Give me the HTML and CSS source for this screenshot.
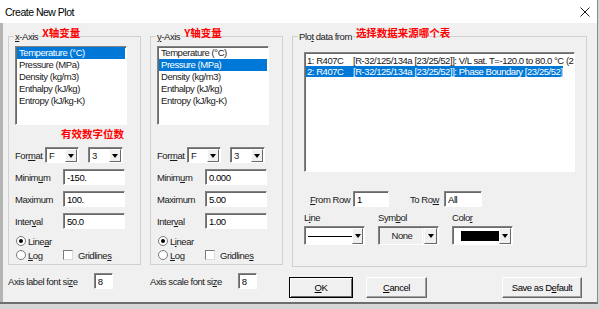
FILE: index.html
```html
<!DOCTYPE html>
<html lang="en">

<head>
    <meta charset="UTF-8">
    <meta name="viewport" content="width=device-width, initial-scale=1.0">
    <title>Create New Plot</title>
    <link rel="stylesheet" href="styles.css">
</head>

<body>
    <div class="dialog">
        <div class="titlebar">
            <span class="title">Create New Plot</span>
            <svg class="close" width="10" height="10" viewBox="0 0 10 10">
                <path d="M0.5 0.5L9.5 9.5M9.5 0.5L0.5 9.5" stroke="#1a1a1a" stroke-width="1" fill="none" />
            </svg>
        </div>

        <div class="content">
            <!-- x axis -->
            <div class="axis-col">
                <fieldset class="group axis-group">
                    <legend><u>x</u>-Axis<span class="note legend-note">X轴变量</span></legend>
                    <div class="listbox axis-list">
                        <div class="item selected">Temperature (°C)</div>
                        <div class="item">Pressure (MPa)</div>
                        <div class="item">Density (kg/m3)</div>
                        <div class="item">Enthalpy (kJ/kg)</div>
                        <div class="item">Entropy (kJ/kg-K)</div>
                    </div>
                    <div class="note digits-note">有效数字位数</div>
                    <div class="field-row">
                        <span class="fmt-label">For<u>m</u>at</span>
                        <div class="combo fmt-combo"><span class="combo-text">F</span><span class="combo-btn"></span></div>
                        <div class="combo fmt-combo digits-combo"><span class="combo-text">3</span><span class="combo-btn"></span></div>
                    </div>
                    <div class="field-row">
                        <span class="field-label">Minim<u>u</u>m</span>
                        <input class="textbox value-box" type="text" value="-150.">
                    </div>
                    <div class="field-row">
                        <span class="field-label">Maximum</span>
                        <input class="textbox value-box" type="text" value="100.">
                    </div>
                    <div class="field-row">
                        <span class="field-label">Inter<u>v</u>al</span>
                        <input class="textbox value-box" type="text" value="50.0">
                    </div>
                    <div class="option-row">
                        <span class="option"><span class="radio checked"></span>Line<u>a</u>r</span>
                    </div>
                    <div class="option-row log-row">
                        <span class="option"><span class="radio"></span><u>L</u>og</span>
                        <span class="check"></span>Gridline<u>s</u>
                    </div>
                </fieldset>
                <div class="font-row">
                    <span>Axis label font si<u>z</u>e</span>
                    <input class="textbox size-box" type="text" value="8">
                </div>
            </div>

            <!-- y axis -->
            <div class="axis-col">
                <fieldset class="group axis-group">
                    <legend><u>y</u>-Axis<span class="note legend-note">Y轴变量</span></legend>
                    <div class="listbox axis-list">
                        <div class="item">Temperature (°C)</div>
                        <div class="item selected">Pressure (MPa)</div>
                        <div class="item">Density (kg/m3)</div>
                        <div class="item">Enthalpy (kJ/kg)</div>
                        <div class="item">Entropy (kJ/kg-K)</div>
                    </div>
                    <div class="note digits-note"></div>
                    <div class="field-row">
                        <span class="fmt-label">For<u>m</u>at</span>
                        <div class="combo fmt-combo"><span class="combo-text">F</span><span class="combo-btn"></span></div>
                        <div class="combo fmt-combo digits-combo"><span class="combo-text">3</span><span class="combo-btn"></span></div>
                    </div>
                    <div class="field-row">
                        <span class="field-label">Minim<u>u</u>m</span>
                        <input class="textbox value-box" type="text" value="0.000">
                    </div>
                    <div class="field-row">
                        <span class="field-label">Maximum</span>
                        <input class="textbox value-box" type="text" value="5.00">
                    </div>
                    <div class="field-row">
                        <span class="field-label">Inter<u>v</u>al</span>
                        <input class="textbox value-box" type="text" value="1.00">
                    </div>
                    <div class="option-row">
                        <span class="option"><span class="radio checked"></span>L<u>i</u>near</span>
                    </div>
                    <div class="option-row log-row">
                        <span class="option"><span class="radio"></span><u>L</u>og</span>
                        <span class="check"></span>Gridline<u>s</u>
                    </div>
                </fieldset>
                <div class="font-row">
                    <span>Axis scale font si<u>z</u>e</span>
                    <input class="textbox size-box" type="text" value="8">
                </div>
            </div>

            <!-- data source -->
            <div class="data-col">
                <fieldset class="group data-group">
                    <legend>Plo<u>t</u> data from<span class="note legend-note">选择数据来源哪个表</span></legend>
                    <div class="listbox data-list">
                        <div class="data-item"><span class="data-id">1: R407C</span>[R-32/125/134a [23/25/52]]: V/L sat. T=-120.0 to 80.0 °C (23/25/52)</div>
                        <div class="data-item"><span class="selected data-sel"><span class="data-id">2: R407C</span>[R-32/125/134a [23/25/52]]: Phase Boundary [23/25/52]</span></div>
                    </div>
                    <div class="row-range">
                        <span class="range-label"><u>F</u>rom Row</span>
                        <input class="textbox from-box" type="text" value="1">
                        <span class="range-label to-label">To Ro<u>w</u></span>
                        <input class="textbox to-box" type="text" value="All">
                    </div>
                    <div class="style-row">
                        <div class="style-col">
                            <span>L<u>i</u>ne</span>
                            <div class="combo style-combo">
                                <span class="combo-text"><span class="line-sample"></span></span>
                                <span class="combo-btn"></span>
                            </div>
                        </div>
                        <div class="style-col">
                            <span>Sym<u>b</u>ol</span>
                            <div class="combo style-combo symbol-combo">
                                <span class="combo-text">None</span>
                                <span class="combo-btn"></span>
                            </div>
                        </div>
                        <div class="style-col">
                            <span>Colo<u>r</u></span>
                            <div class="combo style-combo">
                                <span class="combo-text"><span class="color-sample"></span></span>
                                <span class="combo-btn"></span>
                            </div>
                        </div>
                    </div>
                </fieldset>
                <div class="button-row">
                    <button class="btn btn-default ok-btn"><u>O</u>K</button>
                    <button class="btn cancel-btn"><u>C</u>ancel</button>
                    <button class="btn default-btn">Save as D<u>e</u>fault</button>
                </div>
            </div>
        </div>
    </div>
</body>

</html>
```

FILE: styles.css
```css
body {
  margin: 0;
  background-color: #d6d6d6;
  font-family: "Liberation Sans Narrow", "Arial Narrow", "Liberation Sans", sans-serif;
  font-size: 9.5px;
  letter-spacing: -0.45px;
  color: #1a1a1a;
}

.dialog {
  width: 597px;
  height: 302px;
  background-color: #f0f0f0;
  border-right: 1px solid #8c8c8c;
  border-bottom: 2px solid #6e6e6e;
  display: flex;
  flex-direction: column;
}

.titlebar {
  height: 23px;
  flex-shrink: 0;
  background-color: #fff;
  display: flex;
  align-items: center;
  justify-content: space-between;
  padding: 0 7px 0 5px;
}

.title {
  font-size: 10.5px;
  letter-spacing: -0.5px;
  color: #000;
}

.content {
  flex: 1;
  display: flex;
  border-left: 3px solid #b4b4b4;
  padding: 7px 0 0 5px;
}

/* columns */
.axis-col {
  width: 133px;
  display: flex;
  flex-direction: column;
}

.axis-col + .axis-col,
.data-col {
  margin-left: 9px;
}

.data-col {
  width: 295px;
  display: flex;
  flex-direction: column;
}

/* group boxes */
.group {
  margin: 0;
  padding: 0;
  min-width: 0;
  border: 1px solid #d0d0d0;
}

.group legend {
  position: relative;
  margin-left: 5px;
  padding: 0 1px;
  line-height: 13px;
}

.axis-group {
  padding-bottom: 3px;
}

.data-group {
  padding-bottom: 21px;
}

/* red notes */
.note {
  color: #ff0000;
  font-family: "Noto Sans CJK SC", "Liberation Sans", sans-serif;
  font-weight: bold;
  font-size: 10.5px;
  letter-spacing: 0;
  line-height: 12px;
  white-space: nowrap;
}

.legend-note {
  position: absolute;
  left: 100%;
  top: -3px;
  margin-left: 3px;
}

.digits-note {
  height: 12px;
  margin: 3px 0 0 52px;
}

/* list boxes */
.listbox {
  box-sizing: border-box;
  background-color: #fff;
  border: 1px solid;
  border-color: #828282 #fff #fff #828282;
  box-shadow: inset 1px 1px 0 #696969;
  overflow: hidden;
  white-space: nowrap;
}

.axis-list {
  width: 112px;
  height: 79px;
  margin: 3px 0 0 6px;
  padding: 0 1px;
}

.item {
  height: 12px;
  line-height: 12px;
  padding-left: 2px;
}

.selected {
  background-color: #0078d7;
  color: #fff;
}

.data-list {
  width: 271px;
  height: 120px;
  margin: 9px 0 0 11px;
  padding: 2px 1px 0;
}

.data-item {
  height: 11px;
  line-height: 11px;
}

.data-sel {
  display: inline-block;
}

.data-id {
  display: inline-block;
  width: 46px;
  padding-left: 1px;
}

/* fields */
.field-row {
  display: flex;
  align-items: center;
  height: 16px;
  margin: 6px 0 0 6px;
}

.digits-note + .field-row {
  margin-top: 7px;
}

.fmt-label {
  width: 30px;
}

.field-label {
  width: 48px;
}

.textbox {
  box-sizing: border-box;
  height: 16px;
  margin: 0;
  padding: 0 0 0 3px;
  border: 1px solid;
  border-color: #828282 #fff #fff #828282;
  box-shadow: inset 1px 1px 0 #696969;
  background-color: #fff;
  font: inherit;
  letter-spacing: inherit;
  color: #000;
  outline: none;
}

.value-box {
  width: 62px;
}

.size-box {
  width: 19px;
  margin-left: 16px;
}

.combo {
  box-sizing: border-box;
  display: flex;
  height: 16px;
  border: 1px solid;
  border-color: #828282 #fff #fff #828282;
  box-shadow: inset 1px 1px 0 #696969;
  background-color: #fff;
  padding: 1px 1px 0 1px;
}

.fmt-combo {
  width: 34px;
}

.digits-combo {
  width: 35px;
  margin-left: 9px;
}

.combo-text {
  flex: 1;
  display: flex;
  align-items: center;
  padding-left: 2px;
}

.combo-btn {
  box-sizing: border-box;
  width: 12px;
  border: 1px solid;
  border-color: #fff #696969 #696969 #fff;
  background-color: #f0f0f0;
  display: flex;
  align-items: center;
  justify-content: center;
}

.combo-btn::after {
  content: "";
  border-left: 3px solid transparent;
  border-right: 3px solid transparent;
  border-top: 4px solid #000;
}

/* radio & check */
.option-row {
  display: flex;
  align-items: center;
  height: 12px;
  margin: 6px 0 0 7px;
}

.log-row {
  margin-top: 2px;
}

.option {
  width: 47px;
  display: flex;
  align-items: center;
}

.radio {
  box-sizing: border-box;
  width: 10px;
  height: 10px;
  margin-right: 2px;
  border-radius: 50%;
  border: 1px solid #7a7a7a;
  background-color: #fff;
  display: flex;
  align-items: center;
  justify-content: center;
}

.radio.checked::after {
  content: "";
  width: 4px;
  height: 4px;
  border-radius: 50%;
  background-color: #000;
}

.check {
  box-sizing: border-box;
  width: 10px;
  height: 10px;
  margin-right: 5px;
  border: 1px solid;
  border-color: #7a7a7a #dcdcdc #dcdcdc #7a7a7a;
  background-color: #fff;
}

.font-row {
  display: flex;
  align-items: center;
  margin-top: 8px;
}

/* data source */
.row-range {
  display: flex;
  align-items: center;
  height: 16px;
  margin: 19px 0 0 17px;
  white-space: nowrap;
}

.range-label {
  width: 43px;
}

.from-box {
  width: 36px;
}

.to-label {
  width: 34px;
  margin-left: 21px;
}

.to-box {
  width: 38px;
}

.style-row {
  display: flex;
  margin: 5px 0 0 11px;
}

.style-col {
  width: 74px;
  display: flex;
  flex-direction: column;
}

.style-col span {
  line-height: 12px;
}

.style-combo {
  width: 61px;
  height: 19px;
  margin-top: 2px;
}

.style-combo .combo-btn {
  width: 13px;
}

.symbol-combo {
  background-color: #f0f0f0;
}

.symbol-combo .combo-text {
  justify-content: center;
  border-right: 1px solid #fff;
  margin-right: 1px;
}

.line-sample {
  width: 44px;
  border-top: 1px solid #000;
}

.color-sample {
  width: 38px;
  height: 10px;
  margin-left: 5px;
  background-color: #000;
}

/* buttons */
.button-row {
  display: flex;
  margin: 10px 5px 0 -3px;
}

.btn {
  box-sizing: border-box;
  height: 21px;
  padding: 0;
  border: 1px solid;
  border-color: #fff #696969 #696969 #fff;
  box-shadow: inset -1px -1px 0 #a0a0a0;
  background-color: #f0f0f0;
  font: inherit;
  letter-spacing: inherit;
  color: #000;
}

.btn-default {
  border-color: #000;
  box-shadow: inset 1px 1px 0 #fff, inset -1px -1px 0 #696969;
}

.ok-btn {
  width: 64px;
}

.cancel-btn {
  width: 61px;
  margin-left: 13px;
}

.default-btn {
  width: 80px;
  margin-left: auto;
}
```
